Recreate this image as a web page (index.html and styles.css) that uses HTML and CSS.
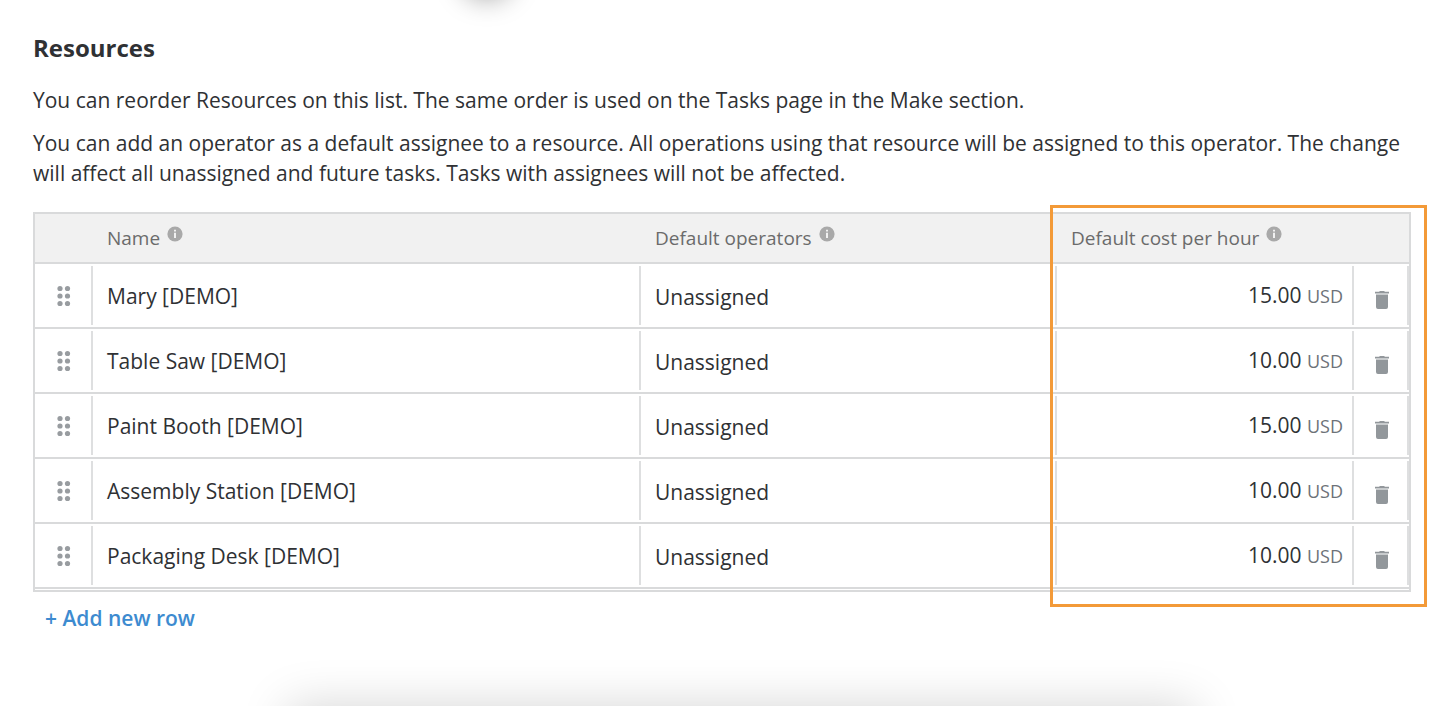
FILE: index.html
```
<!DOCTYPE html>
<html lang="en">

<head>
  <meta charset="utf-8">
  <meta name="viewport" content="width=device-width, initial-scale=1">
  <title>Resources</title>
  <link rel="stylesheet" href="styles.css">
</head>

<body>

  <!-- icons shared by the table -->
  <svg class="sprite" aria-hidden="true">
    <symbol id="icon-info" viewBox="0 0 16 16">
      <circle cx="8" cy="8" r="7.6" fill="#a9a9a9"/>
      <path d="M7 3.8h2v1.8H7zM7 6.8h2v5.2H7z" fill="#f1f1f1"/>
    </symbol>
    <symbol id="icon-drag" viewBox="0 0 14 22">
      <g fill="#989ca0">
        <circle cx="3" cy="3.5" r="2.6"/><circle cx="10.5" cy="3.5" r="2.6"/>
        <circle cx="3" cy="11" r="2.6"/><circle cx="10.5" cy="11" r="2.6"/>
        <circle cx="3" cy="18.5" r="2.6"/><circle cx="10.5" cy="18.5" r="2.6"/>
      </g>
    </symbol>
    <symbol id="icon-trash" viewBox="0 0 14 18">
      <path d="M0 .8h4L5 0h4l1 .8h4v1.7H0zM1 3.6h12V16a2 2 0 0 1-2 2H3a2 2 0 0 1-2-2z" fill="#92979b"/>
    </symbol>
  </svg>

  <div class="shadow-top"></div>

  <main class="page">
    <h2>Resources</h2>
    <p>You can reorder Resources on this list. The same order is used on the Tasks page in the Make section.</p>
    <p>You can add an operator as a default assignee to a resource. All operations using that resource will be assigned to this operator. The change will affect all unassigned and future tasks. Tasks with assignees will not be affected.</p>

    <div class="table-wrapper">
      <table class="resources">
        <thead>
          <tr>
            <th class="col-drag"></th>
            <th>Name <svg class="info"><use href="#icon-info"/></svg></th>
            <th class="col-operators">Default operators <svg class="info"><use href="#icon-info"/></svg></th>
            <th class="col-cost">Default cost per hour <svg class="info"><use href="#icon-info"/></svg></th>
            <th class="col-delete"></th>
          </tr>
        </thead>
        <tbody>
          <tr>
            <td><button class="icon-button drag" aria-label="Reorder"><svg><use href="#icon-drag"/></svg></button></td>
            <td>Mary [DEMO]</td>
            <td class="operator">Unassigned</td>
            <td class="cost">15.00 <span class="currency">USD</span></td>
            <td><button class="icon-button delete" aria-label="Delete"><svg><use href="#icon-trash"/></svg></button></td>
          </tr>
          <tr>
            <td><button class="icon-button drag" aria-label="Reorder"><svg><use href="#icon-drag"/></svg></button></td>
            <td>Table Saw [DEMO]</td>
            <td class="operator">Unassigned</td>
            <td class="cost">10.00 <span class="currency">USD</span></td>
            <td><button class="icon-button delete" aria-label="Delete"><svg><use href="#icon-trash"/></svg></button></td>
          </tr>
          <tr>
            <td><button class="icon-button drag" aria-label="Reorder"><svg><use href="#icon-drag"/></svg></button></td>
            <td>Paint Booth [DEMO]</td>
            <td class="operator">Unassigned</td>
            <td class="cost">15.00 <span class="currency">USD</span></td>
            <td><button class="icon-button delete" aria-label="Delete"><svg><use href="#icon-trash"/></svg></button></td>
          </tr>
          <tr>
            <td><button class="icon-button drag" aria-label="Reorder"><svg><use href="#icon-drag"/></svg></button></td>
            <td>Assembly Station [DEMO]</td>
            <td class="operator">Unassigned</td>
            <td class="cost">10.00 <span class="currency">USD</span></td>
            <td><button class="icon-button delete" aria-label="Delete"><svg><use href="#icon-trash"/></svg></button></td>
          </tr>
          <tr>
            <td><button class="icon-button drag" aria-label="Reorder"><svg><use href="#icon-drag"/></svg></button></td>
            <td>Packaging Desk [DEMO]</td>
            <td class="operator">Unassigned</td>
            <td class="cost">10.00 <span class="currency">USD</span></td>
            <td><button class="icon-button delete" aria-label="Delete"><svg><use href="#icon-trash"/></svg></button></td>
          </tr>
        </tbody>
      </table>
      <div class="highlight"></div>
    </div>

    <button class="add-row">+ Add new row</button>
  </main>

  <div class="shadow-bottom"></div>

</body>

</html>
```
FILE: styles.css
```
* { box-sizing: border-box;}

body {
  margin: 0;
  background-color: white;
  font-family: "Open Sans", sans-serif;
  font-size: 21px;
  line-height: 30px;
  color: #2f3134;
}

.sprite {
  position: absolute;
  width: 0;
  height: 0;
}

.page { padding: 33px 29px 33px 33px;}

h2 {
  margin: 0 0 22px;
  font-size: 24px;
  line-height: 30px;
}

p { margin: 0 0 13px;}

.table-wrapper {
  position: relative;
  margin-top: 24px;
  padding-bottom: 1px;
  border: 2px solid #d9dadb;
}

.resources {
  width: 100%;
  table-layout: fixed;
  border-collapse: separate;
  border-spacing: 0;
}

th {
  height: 50px;
  padding: 0 14px;
  background-color: #f1f1f1;
  border-bottom: 2px solid #d9dadb;
  color: #6b6b6b;
  font-size: 19px;
  font-weight: normal;
  text-align: left;
  white-space: nowrap;
}

.col-drag { width: 58px;}
.col-operators { width: 416px;}
.col-cost { width: 297px;}
.col-delete { width: 55px;}

/* column dividers stop just short of the row lines */
td {
  height: 65px;
  padding: 0 14px;
  border-bottom: 2px solid #d9dadb;
  background: linear-gradient(#dedfe0, #dedfe0) no-repeat right center / 2px calc(100% - 4px);
}

.operator { padding-top: 3px;}

.cost {
  padding-right: 11px;
  text-align: right;
}

.currency {
  font-size: 18px;
  color: #6d7278;
}

.info {
  width: 16px;
  height: 16px;
  margin-left: 2px;
  vertical-align: 3px;
}

.icon-button {
  display: block;
  margin: 0 auto;
  padding: 0;
  border: 0;
  background: none;
  cursor: pointer;
}

.icon-button svg { display: block;}

.drag svg {
  width: 14px;
  height: 22px;
}

.delete { padding-top: 8px;}

.delete svg {
  width: 14px;
  height: 18px;
}

.highlight {
  position: absolute;
  top: -9px;
  right: -18px;
  bottom: -17px;
  width: 377px;
  border: 3px solid #f39a38;
  pointer-events: none;
}

.add-row {
  margin-top: 11px;
  padding: 0 12px;
  border: 0;
  background: none;
  color: #3d8bd0;
  font: 600 21px/30px "Open Sans", sans-serif;
  cursor: pointer;
}

/* soft shadows of the panels above and below the page */
.shadow-top {
  position: absolute;
  top: -52px;
  left: 462px;
  width: 50px;
  height: 50px;
  border-radius: 50%;
  box-shadow: 0 0 28px rgba(0, 0, 0, 0.4);
}

.shadow-bottom {
  position: fixed;
  top: 100%;
  left: 20%;
  right: 17%;
  height: 100px;
  box-shadow: 0 0 48px rgba(0, 0, 0, 0.17);
}
```
